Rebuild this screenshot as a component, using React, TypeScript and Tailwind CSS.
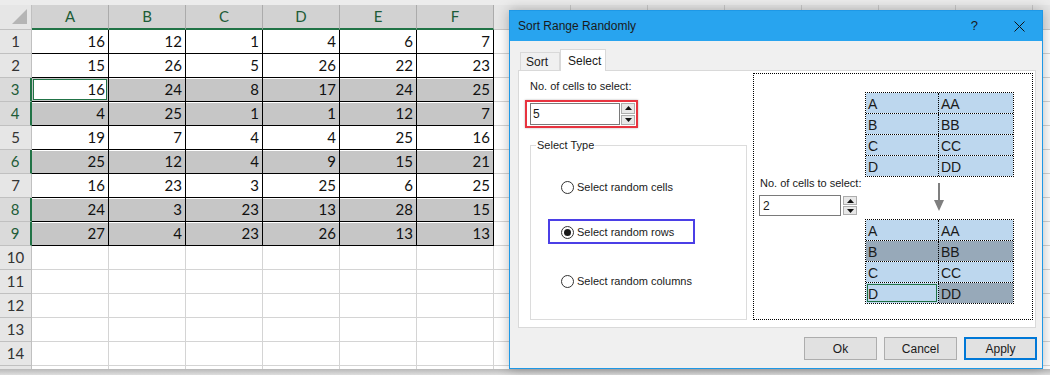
import React from 'react';

const data: number[][] = [
  [16, 12, 1, 4, 6, 7],
  [15, 26, 5, 26, 22, 23],
  [16, 24, 8, 17, 24, 25],
  [4, 25, 1, 1, 12, 7],
  [19, 7, 4, 4, 25, 16],
  [25, 12, 4, 9, 15, 21],
  [16, 23, 3, 25, 6, 25],
  [24, 3, 23, 13, 28, 15],
  [27, 4, 23, 26, 13, 13],
];

const selectedRows = new Set([2, 3, 5, 7, 8]);
const letters = ['A', 'B', 'C', 'D', 'E', 'F', 'G', 'H', 'I', 'J', 'K', 'L', 'M', 'N'];
const rowCount = 15;

function Sheet() {
  return (
    <div className="h-[369px] overflow-hidden bg-white font-['Lato',sans-serif] text-[15px] text-[#111]">
      <div className="h-[5px] bg-[#ececec]" />
      <div className="flex h-[25px]">
        <div className="relative w-[32px] shrink-0 border-r border-b border-[#c0c0c0] bg-[#e6e6e6]">
          <svg className="absolute left-[12px] top-[4px]" width="15" height="15" viewBox="0 0 15 15">
            <polygon points="15,0 15,15 0,15" fill="#b5b5b5" />
          </svg>
        </div>
        {letters.map((l, i) => (
          <div
            key={l}
            className={
              i < 6
                ? 'flex w-[77px] shrink-0 items-center justify-center border-r border-b-2 border-r-[#ababab] border-b-[#217346] bg-[#d2d2d2] text-[#1d5c37]'
                : 'flex w-[77px] shrink-0 items-center justify-center border-r border-b border-[#c8c8c8] bg-[#e6e6e6] text-[#333]'
            }
          >
            {/* columns past F sit under the dialog */}
            {i < 6 ? l : null}
          </div>
        ))}
      </div>
      {Array.from({ length: rowCount }).map((_, r) => {
        const sel = selectedRows.has(r);
        return (
          <div key={r} className="flex h-[24px]">
            <div
              className={
                sel
                  ? 'flex w-[32px] shrink-0 items-center justify-center border-r-2 border-b border-r-[#217346] border-b-[#c0c0c0] bg-[#dadada] text-[#1d5c37]'
                  : 'flex w-[32px] shrink-0 items-center justify-center border-r border-b border-[#c0c0c0] bg-[#e6e6e6] text-[#333]'
              }
            >
              {r < 14 ? r + 1 : null}
            </div>
            {letters.map((l, c) => {
              const inTable = r < 9 && c < 6;
              const active = r === 2 && c === 0;
              let cls = 'w-[77px] shrink-0 border-r border-b border-[#d4d4d4] bg-white';
              if (inTable) {
                cls = sel
                  ? 'flex w-[77px] shrink-0 items-center justify-end border-r border-b border-black bg-[#c6c6c6] pr-[3px] shadow-[inset_0_1px_0_#ffffff]'
                  : 'flex w-[77px] shrink-0 items-center justify-end border-r border-b border-black bg-white pr-[3px]';
              }
              if (active) {
                cls = 'flex w-[77px] shrink-0 items-center justify-end border-r border-b border-black bg-white pr-[3px] shadow-[inset_0_0_0_1px_#c6c6c6,inset_0_0_0_2px_#217346]';
              }
              return (
                <div key={l} className={cls}>
                  {inTable ? data[r][c] : null}
                </div>
              );
            })}
          </div>
        );
      })}
    </div>
  );
}

function Spinner({ h }: { h: string }) {
  return (
    <div className={`flex w-[14px] flex-col gap-[1px] ${h}`}>
      <div className="flex flex-1 items-center justify-center border border-[#adadad] bg-[#e8e8e8]">
        <svg width="7" height="4" viewBox="0 0 7 4">
          <polygon points="3.5,0 7,4 0,4" fill="#111" />
        </svg>
      </div>
      <div className="flex flex-1 items-center justify-center border border-[#adadad] bg-[#e8e8e8]">
        <svg width="7" height="4" viewBox="0 0 7 4">
          <polygon points="0,0 7,0 3.5,4" fill="#111" />
        </svg>
      </div>
    </div>
  );
}

function Radio({ checked, label }: { checked?: boolean; label: string }) {
  return (
    <div className="flex h-[16px] items-center gap-[3px]">
      <div className="flex h-[13px] w-[13px] items-center justify-center rounded-full border border-[#333] bg-white">
        {checked ? <div className="h-[7px] w-[7px] rounded-full bg-[#1a1a1a]" /> : null}
      </div>
      <span>{label}</span>
    </div>
  );
}

type Cell = { t: string; dark?: boolean; active?: boolean };

function MiniTable({ rows }: { rows: Cell[][] }) {
  return (
    <div className="border border-dotted border-black font-['Liberation_Sans',Arial,sans-serif] text-[14px] text-[#1a1a1a]">
      {rows.map((row, i) => (
        <div key={i} className={i < rows.length - 1 ? 'flex h-[21px] border-b border-dotted border-black' : 'flex h-[20px]'}>
          {row.map((cell, j) => (
            <div
              key={j}
              className={`flex items-end pb-[1px] pl-[2px] leading-[16px] ${j === 0 ? 'w-[73px] border-r border-dotted border-black' : 'flex-1'} ${
                cell.dark ? 'bg-[#97a9b9]' : 'bg-[#bdd7ee]'
              } ${cell.active ? 'shadow-[inset_0_0_0_1px_#bdd7ee,inset_0_0_0_2px_#217346]' : ''}`}
            >
              {cell.t}
            </div>
          ))}
        </div>
      ))}
    </div>
  );
}

function Dialog() {
  const before: Cell[][] = [
    [{ t: 'A' }, { t: 'AA' }],
    [{ t: 'B' }, { t: 'BB' }],
    [{ t: 'C' }, { t: 'CC' }],
    [{ t: 'D' }, { t: 'DD' }],
  ];
  const after: Cell[][] = [
    [{ t: 'A' }, { t: 'AA' }],
    [{ t: 'B', dark: true }, { t: 'BB', dark: true }],
    [{ t: 'C' }, { t: 'CC' }],
    [{ t: 'D', active: true }, { t: 'DD', dark: true }],
  ];

  return (
    <div className="absolute left-[509px] top-[10px] flex h-[359px] w-[534px] flex-col border border-[#1e98e6] bg-[#f0f0f0] font-['Liberation_Sans',Arial,sans-serif] text-[11px] text-[#1a1a1a] shadow-[0_0_12px_rgba(0,0,0,0.28)]">
      <div className="flex h-[30px] shrink-0 items-center bg-[#28a4ef] pl-[8px] pr-[17px] text-[12px]">
        <span>Sort Range Randomly</span>
        <span className="ml-auto text-[13px]">?</span>
        <svg className="ml-[36px]" width="11" height="11" viewBox="0 0 11 11">
          <path d="M0.5 0.5L10.5 10.5M10.5 0.5L0.5 10.5" stroke="#111" strokeWidth="1" />
        </svg>
      </div>

      <div className="flex flex-1 flex-col pt-[8px]">
        <div className="ml-[10px] flex h-[21px] items-end">
          <div className="flex h-[18px] w-[40px] items-center border border-b-0 border-[#d9d9d9] bg-[#f0f0f0] pl-[5px] text-[12px]">
            Sort
          </div>
          <div className="relative z-10 -mb-px flex h-[22px] w-[46px] items-center border border-b-0 border-[#d9d9d9] bg-white pl-[7px] text-[12px]">
            Select
          </div>
        </div>

        <div className="ml-[8px] mr-[6px] flex h-[258px] border border-[#d9d9d9] bg-white">
          <div className="flex w-[234px] shrink-0 flex-col">
            <div className="ml-[11px] mt-[8px] leading-[14px]">No. of cells to select:</div>
            <div className="ml-[6px] mt-[7px] flex h-[28px] w-[113px] items-center gap-[1px] border-2 border-[#e8333f] pl-[3px] shadow-[0_0_2px_rgba(0,0,0,0.3)]">
              <div className="flex h-[22px] w-[90px] items-center border border-[#7a7a7a] bg-white pl-[2px] text-[12px]">5</div>
              <Spinner h="h-[22px]" />
            </div>
            <fieldset className="ml-[11px] mt-[10px] h-[182px] w-[217px] border border-[#dcdcdc]">
              <legend className="ml-[5px] px-[1px] leading-[14px]">Select Type</legend>
              <div className="ml-[30px] mt-[27px]">
                <Radio label="Select random cells" />
              </div>
              <div className="ml-[17px] mt-[24px] flex h-[25px] w-[147px] items-center border-2 border-[#4b3fe6] pl-[11px] pt-[2px]">
                <Radio checked label="Select random rows" />
              </div>
              <div className="ml-[30px] mt-[29px]">
                <Radio label="Select random columns" />
              </div>
            </fieldset>
          </div>

          <div className="mt-[2px] flex h-[247px] w-[280px] border border-dotted border-black">
            <div className="w-[111px] shrink-0 pl-[5px]">
              <div className="mt-[102px] whitespace-nowrap pl-[1px] leading-[14px]">No. of cells to select:</div>
              <div className="mt-[5px] flex items-center gap-[2px]">
                <div className="flex h-[21px] w-[82px] items-center border border-[#7a7a7a] bg-white pl-[3px] text-[12px]">2</div>
                <Spinner h="h-[19px]" />
              </div>
            </div>
            <div className="mt-[18px] w-[149px] shrink-0">
              <MiniTable rows={before} />
              <svg className="ml-[68px] mt-[6px]" width="12" height="28" viewBox="0 0 12 28">
                <line x1="6" y1="0" x2="6" y2="19" stroke="#7f7f7f" strokeWidth="2" />
                <polygon points="1,17 11,17 6,28" fill="#7f7f7f" />
              </svg>
              <div className="mt-[8px]">
                <MiniTable rows={after} />
              </div>
            </div>
          </div>
        </div>

        <div className="mr-[5px] mt-[9px] flex justify-end gap-[7px] text-[12px]">
          <button className="h-[23px] w-[73px] border border-[#adadad] bg-[#e1e1e1]">Ok</button>
          <button className="h-[23px] w-[73px] border border-[#adadad] bg-[#e1e1e1]">Cancel</button>
          <button className="h-[23px] w-[73px] border-2 border-[#0078d7] bg-[#e1e1e1]">Apply</button>
        </div>
      </div>
    </div>
  );
}

export default function App() {
  return (
    <div className="relative h-[375px] w-[1050px] overflow-hidden bg-white">
      <Sheet />
      <div className="h-[6px] bg-gradient-to-b from-[#b9b9b9] to-[#dedede]" />
      <Dialog />
    </div>
  );
}
